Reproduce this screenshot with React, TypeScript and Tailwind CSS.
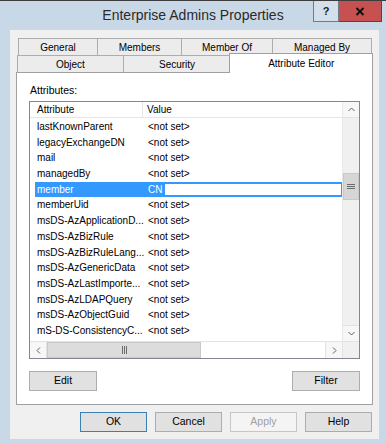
import React from "react"

const rows: [string, string][] = [
  ["lastKnownParent", "<not set>"],
  ["legacyExchangeDN", "<not set>"],
  ["mail", "<not set>"],
  ["managedBy", "<not set>"],
  ["member", "CN"],
  ["memberUid", "<not set>"],
  ["msDS-AzApplicationD...", "<not set>"],
  ["msDS-AzBizRule", "<not set>"],
  ["msDS-AzBizRuleLang...", "<not set>"],
  ["msDS-AzGenericData", "<not set>"],
  ["msDS-AzLastImporte...", "<not set>"],
  ["msDS-AzLDAPQuery", "<not set>"],
  ["msDS-AzObjectGuid", "<not set>"],
  ["mS-DS-ConsistencyC...", "<not set>"],
]

function Chevron({ dir }: { dir: "up" | "down" | "left" | "right" }) {
  const d = {
    up: "M1.5 6 L4.5 3 L7.5 6",
    down: "M1.5 3 L4.5 6 L7.5 3",
    left: "M6 1.5 L3 4.5 L6 7.5",
    right: "M3 1.5 L6 4.5 L3 7.5",
  }[dir]
  return (
    <svg width="9" height="9" viewBox="0 0 9 9">
      <path d={d} fill="none" stroke="#606060" strokeWidth="1" />
    </svg>
  )
}

function Button({ label, className = "", disabled = false }: { label: string; className?: string; disabled?: boolean }) {
  return (
    <div
      className={
        "h-[20px] w-[67px] flex items-center justify-center text-[10.5px] border " +
        (disabled ? "bg-[#f4f4f4] border-[#c6c6c6] text-[#a0a0a0] " : "bg-[#e1e1e1] border-[#adadad] text-black ") +
        className
      }
    >
      {label}
    </div>
  )
}

export default function App() {
  return (
    <div className="w-[386px] h-[444px] bg-[#c9d8e6] border-t border-[#3c3c3c] flex flex-col overflow-hidden font-['Liberation_Sans',Arial,sans-serif] text-black">
      {/* Title bar */}
      <div className="h-[29px] flex items-start shrink-0">
        <div className="w-[73px]" />
        <div className="flex-1 text-center text-[14px] leading-[28px] text-[#2a2a2a]">Enterprise Admins Properties</div>
        <div className="flex mr-[4px] h-[21px]">
          <div className="w-[26px] h-full border border-[#707b86] border-t-0 bg-[#d3dfeb] flex items-center justify-center text-[11px] font-bold text-[#222]">
            ?
          </div>
          <div className="w-[43px] h-full border border-[#7d3333] border-t-0 border-l-0 bg-[#c75050] flex items-center justify-center">
            <svg width="10" height="9" viewBox="0 0 10 9">
              <path d="M1.5 1 L8.5 8 M8.5 1 L1.5 8" stroke="#111" strokeWidth="2" />
            </svg>
          </div>
        </div>
      </div>

      {/* Client area */}
      <div className="ml-[10px] mr-[7px] h-[409px] bg-[#f0f0f0] flex flex-col px-[6px] pt-[8px] shrink-0">
        {/* Tabs back row */}
        <div className="flex h-[17px] pl-[2px] text-[10px]">
          <div className="w-[80px] border border-b-0 border-[#adadad] bg-[#ececec] flex items-center justify-center">General</div>
          <div className="w-[85px] -ml-px border border-b-0 border-[#adadad] bg-[#ececec] flex items-center justify-center">Members</div>
          <div className="w-[92px] -ml-px border border-b-0 border-[#adadad] bg-[#ececec] flex items-center justify-center">Member Of</div>
          <div className="w-[100px] -ml-px border border-b-0 border-[#adadad] bg-[#ececec] flex items-center justify-center">Managed By</div>
        </div>
        {/* Tabs front row */}
        <div className="flex h-[17px] items-end pl-[1px] text-[10px] relative z-10">
          <div className="w-[107px] h-[17px] border border-b-0 border-[#adadad] bg-[#ececec] flex items-center justify-center">Object</div>
          <div className="w-[109px] h-[17px] -ml-px border border-b-0 border-[#adadad] bg-[#ececec] flex items-center justify-center">Security</div>
          <div className="w-[144px] h-[20px] -ml-[2px] -mb-px border border-b-0 border-[#a0a0a0] bg-white flex items-start justify-center pt-[2px]">
            Attribute Editor
          </div>
        </div>

        {/* Tab page */}
        <div className="h-[333px] border border-[#a0a0a0] bg-white px-[12px] pt-[10px] pb-[13px] flex flex-col">
          <div className="h-[14px] text-[10.5px] leading-[14px] pl-[1px]">Attributes:</div>

          {/* List view */}
          <div className="mt-[4px] h-[259px] border border-[#828790] flex flex-col text-[10px]">
            <div className="flex flex-1 min-h-0">
              <div className="flex-1 flex flex-col min-w-0">
                {/* Header */}
                <div className="h-[16px] flex border-b border-[#e5e5e5] shrink-0">
                  <div className="w-[113px] pl-[7px] border-r border-[#e5e5e5] leading-[15px]">Attribute</div>
                  <div className="pl-[4px] leading-[15px]">Value</div>
                </div>
                {/* Rows */}
                <div className="flex-1 overflow-hidden pt-px">
                  {rows.map(([a, v]) =>
                    a === "member" ? (
                      <div key={a} className="h-[15.7px] ml-[5px] flex bg-[#3399ff] text-white">
                        <div className="w-[111px] pl-[2px] leading-[15.7px]">{a}</div>
                        <div className="flex-1 flex pl-[2px]">
                          <span className="leading-[15.7px] whitespace-nowrap">{v}</span>
                          <div className="flex-1 bg-white my-[2.5px] mr-px ml-[3px]" />
                        </div>
                      </div>
                    ) : (
                      <div key={a} className="h-[15.7px] ml-[5px] flex">
                        <div className="w-[111px] pl-[2px] leading-[15.7px] whitespace-nowrap">{a}</div>
                        <div className="pl-[2px] leading-[15.7px] whitespace-nowrap">{v}</div>
                      </div>
                    )
                  )}
                </div>
              </div>
              {/* Vertical scrollbar */}
              <div className="w-[17px] bg-[#f0f0f0] border-l border-[#e8e8e8] flex flex-col">
                <div className="h-[16px] flex items-center justify-center bg-[#f7f7f7] border-b border-[#e3e3e3]">
                  <Chevron dir="up" />
                </div>
                <div className="h-[55px]" />
                <div className="h-[27px] bg-[#d6d6d6] border border-[#c9c9c9] flex items-center justify-center">
                  <svg width="8" height="7" viewBox="0 0 8 7">
                    <path d="M0 1.5 H8 M0 3.5 H8 M0 5.5 H8" stroke="#6a6a6a" strokeWidth="1" />
                  </svg>
                </div>
                <div className="flex-1" />
                <div className="h-[16px] flex items-center justify-center bg-[#f7f7f7] border-t border-[#e3e3e3]">
                  <Chevron dir="down" />
                </div>
              </div>
            </div>
            {/* Horizontal scrollbar */}
            <div className="h-[17px] flex shrink-0">
              <div className="flex-1 flex bg-[#f7f7f7] border-t border-[#e3e3e3]">
                <div className="w-[17px] flex items-center justify-center border-r border-[#e3e3e3]">
                  <Chevron dir="left" />
                </div>
                <div className="w-[154px] bg-[#dcdcdc] border border-[#c9c9c9] flex items-center justify-center">
                  <svg width="7" height="8" viewBox="0 0 7 8">
                    <path d="M1.5 0 V8 M3.5 0 V8 M5.5 0 V8" stroke="#6a6a6a" strokeWidth="1" />
                  </svg>
                </div>
                <div className="flex-1 bg-white" />
                <div className="w-[17px] flex items-center justify-center border-l border-[#e3e3e3]">
                  <Chevron dir="right" />
                </div>
              </div>
              <div className="w-[17px] bg-[#f0f0f0] border-t border-l border-[#e3e3e3]" />
            </div>
          </div>

          <div className="mt-[12px] flex justify-between">
            <Button label="Edit" className="w-[68px]" />
            <Button label="Filter" className="w-[68px]" />
          </div>
        </div>

        {/* Dialog buttons */}
        <div className="mt-[7px] flex justify-end gap-[8px] pr-[1px]">
          <Button label="OK" className="!border-[#3c7fb1]" />
          <Button label="Cancel" />
          <Button label="Apply" disabled />
          <Button label="Help" />
        </div>
      </div>
    </div>
  )
}
